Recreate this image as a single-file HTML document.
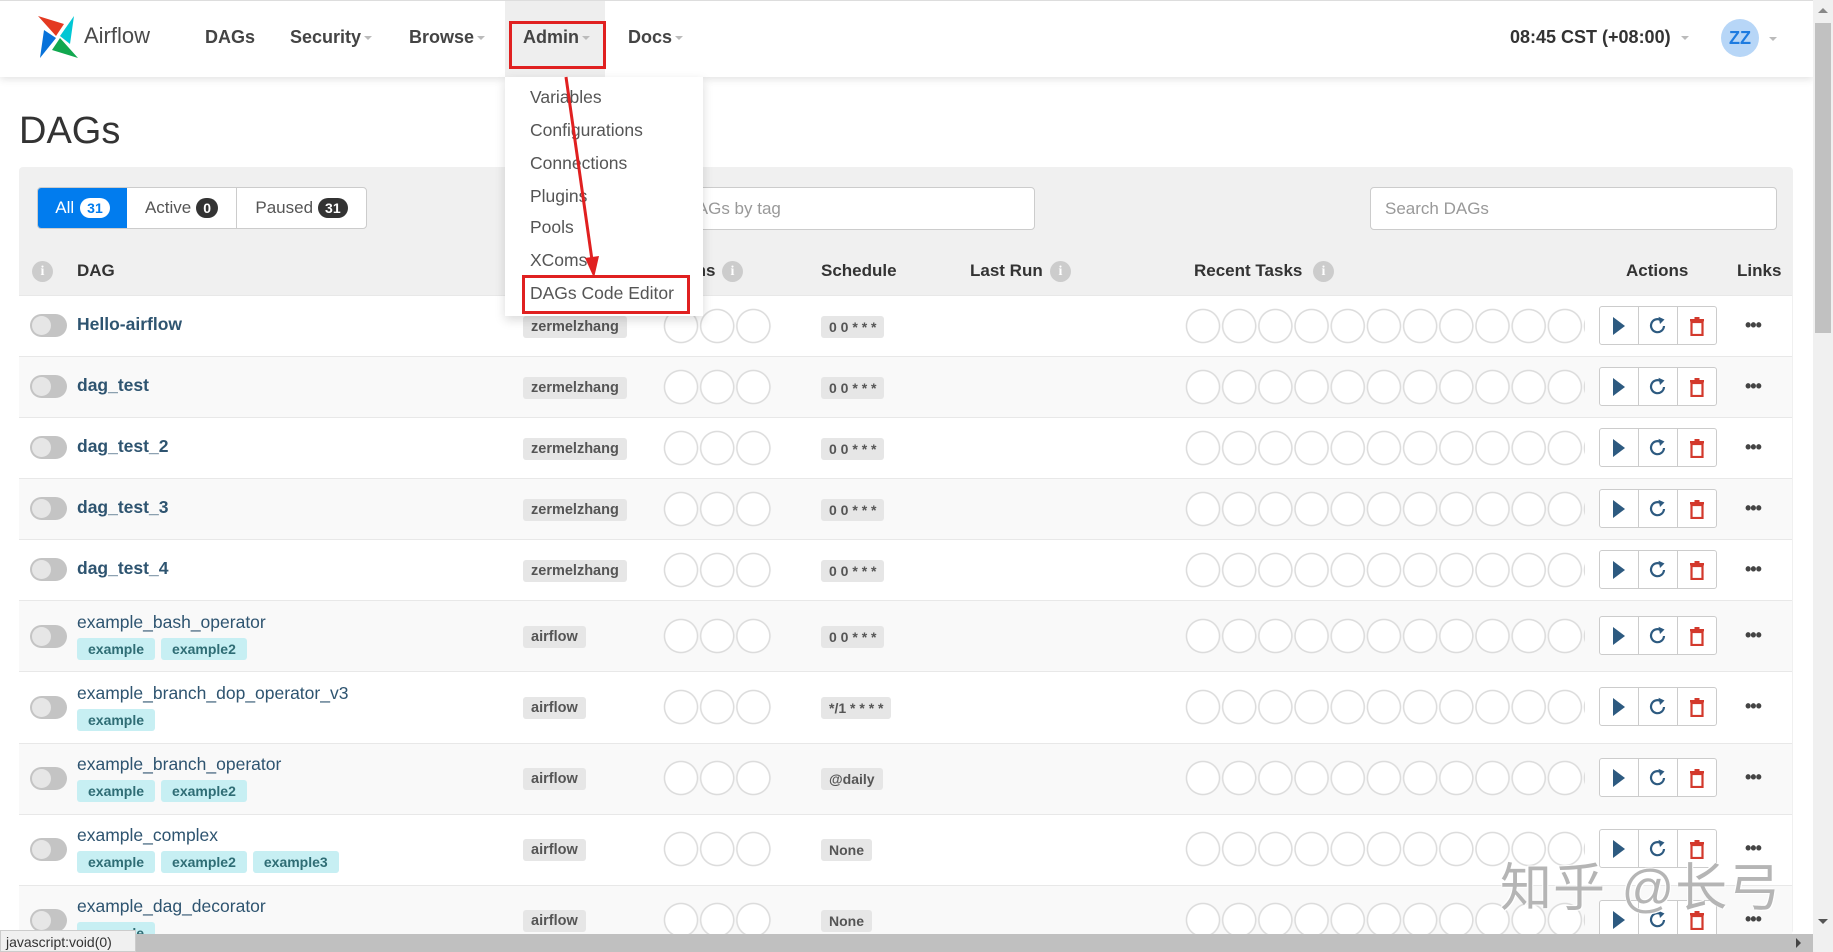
<!DOCTYPE html>
<html style="width:1833px;height:952px;overflow:hidden"><head><meta charset="utf-8">
<style>
*{margin:0;padding:0;box-sizing:border-box}
body{width:1833px;height:952px;overflow:hidden;background:#fff;font-family:"Liberation Sans",Arial,sans-serif;color:#333;position:relative}
.a{position:absolute}
.nav{left:0;top:0;width:1813px;height:77px;background:#fff;box-shadow:0 2px 8px rgba(0,0,0,.12);z-index:5;border-top:1px solid #ddd}
.ni{top:26px;font-size:18px;font-weight:bold;color:#444}
.car{display:inline-block;width:0;height:0;border-left:4px solid transparent;border-right:4px solid transparent;border-top:4px solid #bbb;vertical-align:middle;margin-left:3px}
.panel{left:19px;top:167px;width:1774px;height:767px;background:#f0f0f0;border-radius:4px}
.row{left:19px;width:1773px;border-top:1px solid #e8e8e8}
.tg{left:30px;width:37px;height:23px;border-radius:12px;background:#c4c4c4}
.tg:after{content:"";position:absolute;left:2px;top:2px;width:19px;height:19px;border-radius:50%;background:#e6e6e6}
.nm{left:77px;font-size:17.5px;color:#2e5470}
.b{font-weight:bold}
.tag{display:inline-block;background:#c7eff3;color:#2f6d75;font-size:14px;font-weight:bold;padding:3px 11px;border-radius:3px;margin-right:6px}
.own{left:523px;background:#e6e6e6;color:#555;font-weight:bold;font-size:14.5px;padding:3px 8px;border-radius:3px}
.sch{left:821px;background:#e6e6e6;color:#555;font-weight:bold;font-size:14px;padding:3px 8px;border-radius:3px}
.circ{height:36px;background:radial-gradient(circle at 18px 18px,#fff 0 15.5px,#dcdcdc 16px 17px,transparent 17.6px);background-size:36.2px 36px;background-repeat:repeat-x}
.act{left:1599px;width:118px;height:39px;border:1px solid #ccc;border-radius:3px;background:#fff;display:flex}
.act div{flex:1;border-right:1px solid #ccc;display:flex;align-items:center;justify-content:center}
.act div:last-child{border-right:0}
.dots{left:1745px;font-size:18px;font-weight:bold;color:#444;letter-spacing:-1px}
.hd{top:261px;font-size:17px;font-weight:bold;color:#333}
.info{width:21px;height:21px;border-radius:50%;background:#ccc;color:#fff;font-size:14px;font-weight:bold;text-align:center;line-height:21px;font-family:"Liberation Serif",serif}
.dd{left:505px;top:77px;width:198px;height:239px;background:#fff;box-shadow:0 4px 10px rgba(0,0,0,.15);z-index:6}
.dd div{position:absolute;left:25px;font-size:17.5px;color:#555}
.clip{left:0;top:0;width:1833px;height:934px;overflow:hidden}
</style></head><body>

<div class="a nav">
  <svg class="a" style="left:34px;top:13px" width="48" height="46" viewBox="0 0 48 46">
    <path d="M4 2 L22 22 L30 10 Z" fill="#e43921"/>
    <path d="M40 2 L26 22 L36 30 Z" fill="#00c7d4"/>
    <path d="M44 44 L26 24 L18 36 Z" fill="#11a84f"/>
    <path d="M6 44 L22 24 L10 16 Z" fill="#0872d9"/>
  </svg>
  <div class="a" style="left:84px;top:22px;font-size:22px;color:#4a4a4a">Airflow</div>
  <div class="a ni" style="left:205px">DAGs</div>
  <div class="a ni" style="left:290px">Security<span class="car"></span></div>
  <div class="a ni" style="left:409px">Browse<span class="car"></span></div>
  <div class="a" style="left:505px;top:0;width:100px;height:77px;background:#eee"></div>
  <div class="a ni" style="left:523px">Admin<span class="car"></span></div>
  <div class="a" style="left:509px;top:20px;width:97px;height:48px;border:3px solid #e02020"></div>
  <div class="a ni" style="left:628px">Docs<span class="car"></span></div>
  <div class="a ni" style="left:1510px;color:#333">08:45 CST (+08:00)<span class="car" style="margin-left:10px"></span></div>
  <div class="a" style="left:1721px;top:18px;width:38px;height:38px;border-radius:50%;background:#b7d6f7;color:#1d7be0;font-weight:bold;font-size:18px;text-align:center;line-height:38px">ZZ</div>
  <span class="a car" style="left:1766px;top:36px"></span>
</div>

<div class="a clip">
<div class="a" style="left:19px;top:110px;font-size:38px;color:#333">DAGs</div>
<div class="a panel"></div>

<div class="a" style="left:37px;top:187px;width:330px;height:42px;border:1px solid #ccc;border-radius:4px;background:#fff;display:flex;font-size:17px;color:#555">
  <div style="width:89px;background:#017cee;color:#fff;display:flex;align-items:center;justify-content:center;border-radius:3px 0 0 3px">All <span style="background:#fff;color:#017cee;border-radius:10px;font-size:14px;font-weight:bold;padding:2px 7px;margin-left:6px">31</span></div>
  <div style="width:110px;border-right:1px solid #ccc;display:flex;align-items:center;justify-content:center">Active <span style="background:#333;color:#fff;border-radius:10px;font-size:14px;font-weight:bold;padding:2px 7px;margin-left:5px">0</span></div>
  <div style="flex:1;display:flex;align-items:center;justify-content:center">Paused <span style="background:#333;color:#fff;border-radius:10px;font-size:14px;font-weight:bold;padding:2px 7px;margin-left:5px">31</span></div>
</div>
<div class="a" style="left:627px;top:187px;width:408px;height:43px;border:1px solid #ccc;border-radius:4px;background:#fff;font-size:17px;color:#999;padding:11px 14px">Filter DAGs by tag</div>
<div class="a" style="left:1370px;top:187px;width:407px;height:43px;border:1px solid #ccc;border-radius:4px;background:#fff;font-size:17px;color:#999;padding:11px 14px">Search DAGs</div>

<div class="a info" style="left:32px;top:261px">i</div>
<div class="a hd" style="left:77px">DAG</div>
<div class="a hd" style="left:523px">Owner</div>
<div class="a hd" style="left:673px">Runs</div>
<div class="a info" style="left:722px;top:261px">i</div>
<div class="a hd" style="left:821px">Schedule</div>
<div class="a hd" style="left:970px">Last Run</div>
<div class="a info" style="left:1050px;top:261px">i</div>
<div class="a hd" style="left:1194px">Recent Tasks</div>
<div class="a info" style="left:1313px;top:261px">i</div>
<div class="a hd" style="left:1626px">Actions</div>
<div class="a hd" style="left:1737px">Links</div>

<div class="a row" style="top:295px;height:61px;background:#fff"></div>
<div class="a row" style="top:356px;height:61px;background:#f9f9f9"></div>
<div class="a row" style="top:417px;height:61px;background:#fff"></div>
<div class="a row" style="top:478px;height:61px;background:#f9f9f9"></div>
<div class="a row" style="top:539px;height:61px;background:#fff"></div>
<div class="a row" style="top:600px;height:71px;background:#f9f9f9"></div>
<div class="a row" style="top:671px;height:72px;background:#fff"></div>
<div class="a row" style="top:743px;height:71px;background:#f9f9f9"></div>
<div class="a row" style="top:814px;height:71px;background:#fff"></div>
<div class="a row" style="top:885px;height:71px;background:#f9f9f9"></div>

<div class="a tg" style="top:314px"></div><div class="a nm b" style="top:314px">Hello-airflow</div>
<div class="a tg" style="top:375px"></div><div class="a nm b" style="top:375px">dag_test</div>
<div class="a tg" style="top:436px"></div><div class="a nm b" style="top:436px">dag_test_2</div>
<div class="a tg" style="top:497px"></div><div class="a nm b" style="top:497px">dag_test_3</div>
<div class="a tg" style="top:558px"></div><div class="a nm b" style="top:558px">dag_test_4</div>

<div class="a tg" style="top:625px"></div><div class="a nm" style="top:612px">example_bash_operator</div>
<div class="a" style="left:77px;top:638px"><span class="tag">example</span><span class="tag">example2</span></div>
<div class="a tg" style="top:696px"></div><div class="a nm" style="top:683px">example_branch_dop_operator_v3</div>
<div class="a" style="left:77px;top:709px"><span class="tag">example</span></div>
<div class="a tg" style="top:767px"></div><div class="a nm" style="top:754px">example_branch_operator</div>
<div class="a" style="left:77px;top:780px"><span class="tag">example</span><span class="tag">example2</span></div>
<div class="a tg" style="top:838px"></div><div class="a nm" style="top:825px">example_complex</div>
<div class="a" style="left:77px;top:851px"><span class="tag">example</span><span class="tag">example2</span><span class="tag">example3</span></div>
<div class="a tg" style="top:909px"></div><div class="a nm" style="top:896px">example_dag_decorator</div>
<div class="a" style="left:77px;top:922px"><span class="tag">example</span></div>

<div class="a own" style="top:316px">zermelzhang</div>
<div class="a own" style="top:377px">zermelzhang</div>
<div class="a own" style="top:438px">zermelzhang</div>
<div class="a own" style="top:499px">zermelzhang</div>
<div class="a own" style="top:560px">zermelzhang</div>
<div class="a own" style="top:626px">airflow</div>
<div class="a own" style="top:697px">airflow</div>
<div class="a own" style="top:768px">airflow</div>
<div class="a own" style="top:839px">airflow</div>
<div class="a own" style="top:910px">airflow</div>

<div class="a sch" style="top:316px">0 0 * * *</div>
<div class="a sch" style="top:377px">0 0 * * *</div>
<div class="a sch" style="top:438px">0 0 * * *</div>
<div class="a sch" style="top:499px">0 0 * * *</div>
<div class="a sch" style="top:560px">0 0 * * *</div>
<div class="a sch" style="top:626px">0 0 * * *</div>
<div class="a sch" style="top:697px">*/1 * * * *</div>
<div class="a sch" style="top:768px">@daily</div>
<div class="a sch" style="top:839px">None</div>
<div class="a sch" style="top:910px">None</div>

<div class="a circ" style="left:663px;top:308px;width:109px"></div><div class="a circ" style="left:1185px;top:308px;width:400px"></div>
<div class="a circ" style="left:663px;top:369px;width:109px"></div><div class="a circ" style="left:1185px;top:369px;width:400px"></div>
<div class="a circ" style="left:663px;top:430px;width:109px"></div><div class="a circ" style="left:1185px;top:430px;width:400px"></div>
<div class="a circ" style="left:663px;top:491px;width:109px"></div><div class="a circ" style="left:1185px;top:491px;width:400px"></div>
<div class="a circ" style="left:663px;top:552px;width:109px"></div><div class="a circ" style="left:1185px;top:552px;width:400px"></div>
<div class="a circ" style="left:663px;top:618px;width:109px"></div><div class="a circ" style="left:1185px;top:618px;width:400px"></div>
<div class="a circ" style="left:663px;top:689px;width:109px"></div><div class="a circ" style="left:1185px;top:689px;width:400px"></div>
<div class="a circ" style="left:663px;top:760px;width:109px"></div><div class="a circ" style="left:1185px;top:760px;width:400px"></div>
<div class="a circ" style="left:663px;top:831px;width:109px"></div><div class="a circ" style="left:1185px;top:831px;width:400px"></div>
<div class="a circ" style="left:663px;top:902px;width:109px"></div><div class="a circ" style="left:1185px;top:902px;width:400px"></div>

<svg width="0" height="0" style="position:absolute"><defs>
<g id="pl"><path d="M4 1 L16 10 L4 19 Z" fill="#2d5a80"/></g>
<g id="rf"><path d="M16 10 A6.5 6.5 0 1 1 13 4.2" fill="none" stroke="#2d5a80" stroke-width="2.2"/><path d="M10.5 0.8 L16.5 3.5 L12 8 Z" fill="#2d5a80"/></g>
<g id="tr"><rect x="4.5" y="6" width="11" height="13" fill="none" stroke="#d3392c" stroke-width="2.2"/><rect x="3" y="3" width="14" height="2.4" fill="#d3392c"/><rect x="7.5" y="1" width="5" height="2.4" fill="#d3392c"/></g>
</defs></svg>
<div class="a act" style="top:306px"><div><svg width="20" height="20"><use href="#pl"/></svg></div><div><svg width="20" height="20"><use href="#rf"/></svg></div><div><svg width="20" height="20"><use href="#tr"/></svg></div></div>
<div class="a act" style="top:367px"><div><svg width="20" height="20"><use href="#pl"/></svg></div><div><svg width="20" height="20"><use href="#rf"/></svg></div><div><svg width="20" height="20"><use href="#tr"/></svg></div></div>
<div class="a act" style="top:428px"><div><svg width="20" height="20"><use href="#pl"/></svg></div><div><svg width="20" height="20"><use href="#rf"/></svg></div><div><svg width="20" height="20"><use href="#tr"/></svg></div></div>
<div class="a act" style="top:489px"><div><svg width="20" height="20"><use href="#pl"/></svg></div><div><svg width="20" height="20"><use href="#rf"/></svg></div><div><svg width="20" height="20"><use href="#tr"/></svg></div></div>
<div class="a act" style="top:550px"><div><svg width="20" height="20"><use href="#pl"/></svg></div><div><svg width="20" height="20"><use href="#rf"/></svg></div><div><svg width="20" height="20"><use href="#tr"/></svg></div></div>
<div class="a act" style="top:616px"><div><svg width="20" height="20"><use href="#pl"/></svg></div><div><svg width="20" height="20"><use href="#rf"/></svg></div><div><svg width="20" height="20"><use href="#tr"/></svg></div></div>
<div class="a act" style="top:687px"><div><svg width="20" height="20"><use href="#pl"/></svg></div><div><svg width="20" height="20"><use href="#rf"/></svg></div><div><svg width="20" height="20"><use href="#tr"/></svg></div></div>
<div class="a act" style="top:758px"><div><svg width="20" height="20"><use href="#pl"/></svg></div><div><svg width="20" height="20"><use href="#rf"/></svg></div><div><svg width="20" height="20"><use href="#tr"/></svg></div></div>
<div class="a act" style="top:829px"><div><svg width="20" height="20"><use href="#pl"/></svg></div><div><svg width="20" height="20"><use href="#rf"/></svg></div><div><svg width="20" height="20"><use href="#tr"/></svg></div></div>
<div class="a act" style="top:900px"><div><svg width="20" height="20"><use href="#pl"/></svg></div><div><svg width="20" height="20"><use href="#rf"/></svg></div><div><svg width="20" height="20"><use href="#tr"/></svg></div></div>

<div class="a dots" style="top:315px">•••</div>
<div class="a dots" style="top:376px">•••</div>
<div class="a dots" style="top:437px">•••</div>
<div class="a dots" style="top:498px">•••</div>
<div class="a dots" style="top:559px">•••</div>
<div class="a dots" style="top:625px">•••</div>
<div class="a dots" style="top:696px">•••</div>
<div class="a dots" style="top:767px">•••</div>
<div class="a dots" style="top:838px">•••</div>
<div class="a dots" style="top:909px">•••</div>

<div class="a" style="left:1500px;top:846px;font-family:'Liberation Sans','Noto Sans CJK SC',sans-serif;font-size:52px;color:#b5b5b5;text-shadow:1px 1px 0 #fff,-1px -1px 0 #fff;letter-spacing:1px;z-index:4">知乎 @长弓</div>
</div>

<div class="a dd">
  <div style="top:10px">Variables</div>
  <div style="top:43px">Configurations</div>
  <div style="top:76px">Connections</div>
  <div style="top:109px">Plugins</div>
  <div style="top:140px">Pools</div>
  <div style="top:173px">XComs</div>
  <div style="top:206px">DAGs Code Editor</div>
  <span class="a" style="left:17px;top:198px;width:168px;height:39px;border:3px solid #e02020"></span>
</div>
<svg class="a" style="left:0;top:0;z-index:7" width="1833" height="952"><line x1="566" y1="77" x2="592" y2="260" stroke="#e02020" stroke-width="3"/><path d="M585 258 L599 256 L594 278 Z" fill="#e02020"/></svg>

<div class="a" style="left:1813px;top:0;width:20px;height:952px;background:#f0f0f0;z-index:8"></div>
<div class="a" style="left:1815px;top:23px;width:16px;height:310px;background:#c1c1c1;z-index:9"></div>
<div class="a" style="left:1818px;top:8px;width:0;height:0;border-left:5px solid transparent;border-right:5px solid transparent;border-bottom:5px solid #888;z-index:9"></div>
<div class="a" style="left:1818px;top:919px;width:0;height:0;border-left:5px solid transparent;border-right:5px solid transparent;border-top:5px solid #555;z-index:9"></div>
<div class="a" style="left:0;top:934px;width:1813px;height:18px;background:#c0c0c0;z-index:8"></div>
<div class="a" style="left:1796px;top:938px;width:0;height:0;border-top:5px solid transparent;border-bottom:5px solid transparent;border-left:5px solid #444;z-index:9"></div>
<div class="a" style="left:0;top:930px;width:136px;height:22px;background:#f0f0f0;border:1px solid #ccc;font-size:14px;color:#333;padding:3px 5px;z-index:10">javascript:void(0)</div>
</body></html>
